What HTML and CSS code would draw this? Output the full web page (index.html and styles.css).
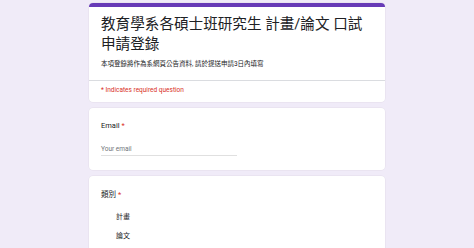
FILE: index.html
```html
<!DOCTYPE html>
<html lang="zh-Hant">
<head>
<meta charset="utf-8">
<title>教育學系各碩士班研究生 計畫/論文 口試申請登錄</title>
<link rel="stylesheet" href="styles.css">
</head>
<body>
<main class="form">
  <section class="card">
    <div class="band"></div>
    <div class="head">
      <h1 class="title">教育學系各碩士班研究生 計畫/論文 口試申請登錄</h1>
      <p class="desc">本項登錄將作為系網頁公告資料, 請於提送申請3日內填寫</p>
    </div>
    <div class="req">* Indicates required question</div>
  </section>

  <section class="card q">
    <div class="label">Email <span class="star">*</span></div>
    <div class="input">Your email</div>
  </section>

  <section class="card q last">
    <div class="label">類別 <span class="star">*</span></div>
    <div class="options">
      <div class="opt">計畫</div>
      <div class="opt">論文</div>
    </div>
  </section>
</main>
</body>
</html>
```

FILE: styles.css
```css
html, body {
  margin: 0;
  padding: 0;
  background: #f0ebf8;
  height: 100%;
  overflow: hidden;
}
body {
  font-family: Roboto, "Noto Sans CJK TC", "Noto Sans", sans-serif;
  color: #202124;
}
.form {
  width: 296px;
  margin: 0 auto;
  padding-top: 3px;
  display: flex;
  flex-direction: column;
  gap: 6px;
}
.card {
  background: #ffffff;
  border-radius: 4px;
  overflow: hidden;
  box-shadow: 0 0 0 0.5px #e3deea;
}
.band {
  height: 4px;
  background: #673ab7;
}
.head {
  padding: 7px 14px 11px 12px;
}
.title {
  margin: 0;
  font-size: 14.6px;
  line-height: 20px;
  font-weight: 400;
  color: #202124;
}
.desc {
  margin: 5.5px 0 0;
  font-size: 6.5px;
  line-height: 9px;
  color: #202124;
}
.req {
  border-top: 1px solid #dadce0;
  padding: 5px 12px 7px;
  font-size: 6.5px;
  line-height: 9px;
  color: #d93025;
}
.q {
  padding: 13px 12px 14px;
}
.label {
  font-size: 7.5px;
  line-height: 9px;
  font-weight: 400;
  color: #202124;
}
.star {
  color: #d93025;
}
.input {
  margin-top: 15.5px;
  width: 136px;
  font-size: 6.5px;
  line-height: 9px;
  color: #70757a;
  padding-bottom: 1px;
  border-bottom: 1px solid #e0e0e0;
}
.last {
  padding-top: 14px;
  padding-bottom: 20px;
}
.options {
  margin-top: 13.5px;
  padding-left: 15px;
  display: flex;
  flex-direction: column;
  gap: 10px;
}
.opt {
  font-size: 7px;
  line-height: 9px;
  color: #202124;
}
```
